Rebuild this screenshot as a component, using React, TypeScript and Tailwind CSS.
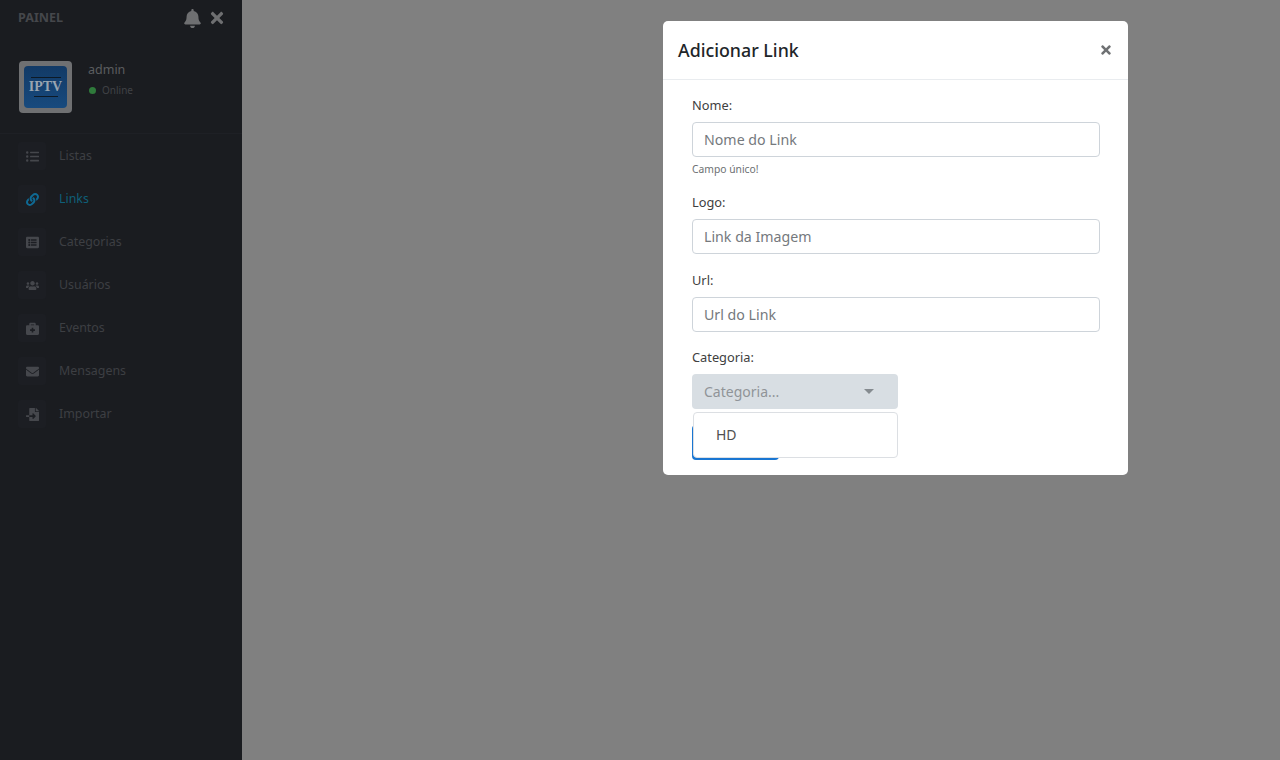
import { FaBell, FaTimes, FaListUl, FaLink, FaListAlt, FaUsers, FaBriefcaseMedical, FaEnvelope, FaFileImport } from "react-icons/fa";

const menu = [
  { label: "Listas", icon: FaListUl },
  { label: "Links", icon: FaLink, active: true },
  { label: "Categorias", icon: FaListAlt },
  { label: "Usuários", icon: FaUsers },
  { label: "Eventos", icon: FaBriefcaseMedical },
  { label: "Mensagens", icon: FaEnvelope },
  { label: "Importar", icon: FaFileImport },
];

const fields = [
  { label: "Nome:", placeholder: "Nome do Link", help: "Campo único!" },
  { label: "Logo:", placeholder: "Link da Imagem" },
  { label: "Url:", placeholder: "Url do Link" },
];

const Sidebar = () => {
  return (
    <aside className="w-[242px] h-full shrink-0 bg-[#1a1c20] flex flex-col">
      <div className="h-[36px] pl-[18px] pr-[16px] flex items-center justify-between">
        <span className="text-[12.6px] font-bold text-[#45474b]">PAINEL</span>
        <div className="flex items-center gap-[6px] text-[#6e6f71]">
          <FaBell className="text-[19px]" />
          <FaTimes className="text-[18px]" />
        </div>
      </div>
      <div className="h-[98px] pl-[19px] pb-[2px] flex items-start pt-[25px] border-b border-[#1e2025]">
        <div className="w-[53px] h-[52px] rounded-[4px] bg-[#6f7072] p-[5px]">
          <div className="w-full h-full rounded-[4px] bg-linear-to-b from-[#123a66] to-[#174a7e] flex flex-col items-center justify-center gap-[2px]">
            <span className="w-[30px] h-[1px] bg-[#0d1a26]" />
            <span className="text-[14px] leading-none font-bold text-[#98a4b0] font-['Liberation_Serif',serif]">IPTV</span>
            <span className="w-[24px] h-[1px] bg-[#0d1a26]" />
          </div>
        </div>
        <div className="ml-[16px]">
          <p className="text-[12.5px] leading-[18px] text-[#5b5c5f]">admin</p>
          <div className="mt-[4px] flex items-center gap-[6px]">
            <span className="w-[7px] h-[7px] ml-[1px] rounded-full bg-[#2f7a3b]" />
            <span className="text-[10px] leading-[14px] text-[#404246]">Online</span>
          </div>
        </div>
      </div>
      <nav className="pl-[18px] pt-[8px] flex flex-col gap-[15px]">
        {menu.map((item) => (
          <div key={item.label} className="flex items-center gap-[13px]">
            <div className="w-[28px] h-[28px] rounded-[3px] bg-[#1c1e23] flex items-center justify-center">
              <item.icon className={`text-[13px] ${item.active ? "text-[#0f6a94]" : "text-[#45474c]"}`} />
            </div>
            <span className={`text-[12.4px] ${item.active ? "text-[#0f5f78]" : "text-[#3d3f43]"}`}>{item.label}</span>
          </div>
        ))}
      </nav>
    </aside>
  );
};

const Modal = () => {
  return (
    <div className="w-[465px] h-[454px] mt-[21px] ml-[421px] bg-white rounded-[5px] flex flex-col">
      <div className="h-[59px] shrink-0 pl-[15px] pr-[15px] flex items-center justify-between border-b border-[#e9ecef]">
        <h2 className="text-[17.8px] font-medium text-[#212529]">Adicionar Link</h2>
        <FaTimes className="text-[14px] text-[#6f7173]" />
      </div>
      <div className="pl-[29px] pr-[28px] pt-[16px] flex flex-col">
        {fields.map((field) => (
          <div key={field.label} className="mb-[17px]">
            <label className="block h-[19px] mb-[7px] text-[12.8px] leading-[19px] text-[#404040]">{field.label}</label>
            <div className="h-[35px] px-[11px] pt-[1px] flex items-center rounded-[4px] border border-[#ced4da] text-[14.2px] text-[#75797d]">
              {field.placeholder}
            </div>
            {field.help && <p className="mt-[5px] h-[14px] text-[10.3px] leading-[14px] text-[#6c6f72]">{field.help}</p>}
          </div>
        ))}
        <div className="-mt-[1px]">
          <label className="block h-[19px] mb-[7px] text-[12.8px] leading-[19px] text-[#404040]">Categoria:</label>
          <div className="relative w-[206px]">
            <div className="h-[35px] pl-[12px] pr-[24px] flex items-center justify-between rounded-[4px] bg-[#d8dee3] text-[14px] text-[#909498]">
              <span>Categoria...</span>
              <span className="w-0 h-0 border-x-[5px] border-x-transparent border-t-[5px] border-t-[#858b90]" />
            </div>
            <div className="mt-[16px] w-[87px] h-[35px] rounded-[4px] bg-[#1976d2]" />
            <div className="absolute left-[1px] top-[38px] w-[205px] h-[46px] pl-[22px] pb-[2px] flex items-center rounded-[4px] bg-white border border-[#dcdfe3] text-[14px] text-[#505050]">
              HD
            </div>
          </div>
        </div>
      </div>
    </div>
  );
};

export default function App() {
  return (
    <div className="w-full h-[760px] flex overflow-hidden bg-[#808080] font-['Noto_Sans',sans-serif]">
      <Sidebar />
      <Modal />
    </div>
  );
}
